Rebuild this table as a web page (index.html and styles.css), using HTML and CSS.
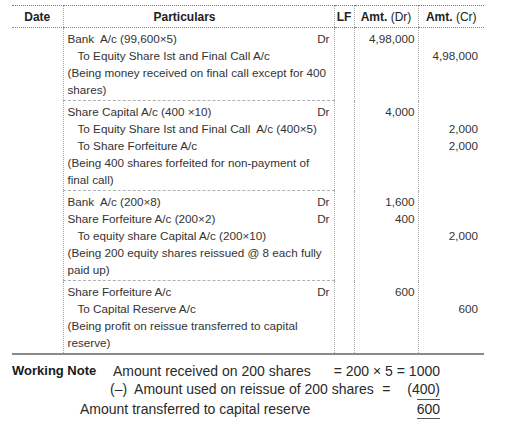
FILE: index.html
```html
<!DOCTYPE html>
<html>
<head>
<meta charset="utf-8">
<link rel="stylesheet" href="styles.css">
</head>
<body>
<div class="page">
<table class="journal">
  <colgroup>
    <col class="c-date"><col class="c-part"><col class="c-lf"><col class="c-dr"><col class="c-cr">
  </colgroup>
  <thead>
    <tr>
      <th class="h-date">Date</th>
      <th class="h-part">Particulars</th>
      <th class="h-lf">LF</th>
      <th class="h-amt">Amt. <span class="reg">(Dr)</span></th>
      <th class="h-amt">Amt. <span class="reg">(Cr)</span></th>
    </tr>
  </thead>
  <tbody>
    <tr>
      <td class="date"></td>
      <td class="part">
        <div class="ln dr"><span>Bank&nbsp; A/c (99,600×5)</span><span>Dr</span></div>
        <div class="ln to">To Equity Share Ist and Final Call A/c</div>
        <div class="ln">(Being money received on final call except for 400</div>
        <div class="ln">shares)</div>
      </td>
      <td class="lf"></td>
      <td class="amt dr-amt"><div class="ln">4,98,000</div></td>
      <td class="amt cr-amt"><div class="ln">&nbsp;</div><div class="ln">4,98,000</div></td>
    </tr>
    <tr>
      <td class="date"></td>
      <td class="part">
        <div class="ln dr"><span>Share Capital A/c (400 ×10)</span><span>Dr</span></div>
        <div class="ln to">To Equity Share Ist and Final Call&nbsp; A/c (400×5)</div>
        <div class="ln to">To Share Forfeiture A/c</div>
        <div class="ln">(Being 400 shares forfeited for non-payment of</div>
        <div class="ln">final call)</div>
      </td>
      <td class="lf"></td>
      <td class="amt dr-amt"><div class="ln">4,000</div></td>
      <td class="amt cr-amt"><div class="ln">&nbsp;</div><div class="ln">2,000</div><div class="ln">2,000</div></td>
    </tr>
    <tr>
      <td class="date"></td>
      <td class="part">
        <div class="ln dr"><span>Bank&nbsp; A/c (200×8)</span><span>Dr</span></div>
        <div class="ln dr"><span>Share Forfeiture A/c (200×2)</span><span>Dr</span></div>
        <div class="ln to">To equity share Capital A/c (200×10)</div>
        <div class="ln">(Being 200 equity shares reissued @ 8 each fully</div>
        <div class="ln">paid up)</div>
      </td>
      <td class="lf"></td>
      <td class="amt dr-amt"><div class="ln">1,600</div><div class="ln">400</div></td>
      <td class="amt cr-amt"><div class="ln">&nbsp;</div><div class="ln">&nbsp;</div><div class="ln">2,000</div></td>
    </tr>
    <tr>
      <td class="date"></td>
      <td class="part">
        <div class="ln dr"><span>Share Forfeiture A/c</span><span>Dr</span></div>
        <div class="ln to">To Capital Reserve A/c</div>
        <div class="ln">(Being profit on reissue transferred to capital</div>
        <div class="ln">reserve)</div>
      </td>
      <td class="lf"></td>
      <td class="amt dr-amt"><div class="ln">600</div></td>
      <td class="amt cr-amt"><div class="ln">&nbsp;</div><div class="ln">600</div></td>
    </tr>
  </tbody>
</table>

<div class="wn">
  <div class="wn-row">
    <div class="wn-left"><b class="wn-label">Working Note</b><span class="wn-t1">Amount received on 200 shares</span></div>
    <div class="wn-right">= 200 × 5 = 1000</div>
  </div>
  <div class="wn-row">
    <div class="wn-left"><span class="wn-t2">(–)&nbsp; Amount used on reissue of 200 shares</span></div>
    <div class="wn-right"><span class="eq">=</span><span>(400)</span></div>
  </div>
  <div class="wn-row last">
    <div class="wn-left"><span class="wn-t3">Amount transferred to capital reserve</span></div>
    <div class="wn-right"><span class="total">600</span></div>
  </div>
</div>
</div>
</body>
</html>
```

FILE: styles.css
```css
html, body {
  margin: 0;
  padding: 0;
  background: #ffffff;
}

body {
  font-family: "Liberation Sans", Arial, sans-serif;
  color: #333333;
}

.page {
  padding: 5px 0 0 12px;
  width: 472px;
}

.journal {
  width: 472px;
  table-layout: fixed;
  border-collapse: collapse;
  font-size: 11.7px;
}

.c-date { width: 51px; }
.c-part { width: 271px; }
.c-lf { width: 20px; }
.c-dr { width: 64px; }
.c-cr { width: 66px; }

.journal th {
  height: 21px;
  padding: 0;
  font-size: 12px;
  font-weight: bold;
  color: #222222;
  text-align: center;
  vertical-align: middle;
  border-top: 1px dotted #777777;
  border-bottom: 1px dotted #888888;
}

.journal th .reg {
  font-weight: normal;
}

.journal th.h-part {
  padding-right: 28px;
}

.journal th + th,
.journal td + td {
  border-left: 1px dotted #a8a8a8;
}

.journal td {
  padding: 2px 0;
  vertical-align: top;
}

.journal tbody tr:last-child td {
  border-bottom: 2px solid #8a8a8a;
}

.journal td.part {
  padding-left: 4px;
  padding-right: 4px;
  border-bottom: 1px dashed #b0b0b0;
}

.ln {
  height: 17px;
  line-height: 17px;
  white-space: nowrap;
}

.ln.dr {
  display: flex;
  justify-content: space-between;
}

.ln.to {
  padding-left: 10px;
}

.amt {
  text-align: right;
}

.dr-amt {
  padding-right: 3px !important;
}

.cr-amt {
  padding-right: 6px !important;
}

/* Working note */
.wn {
  margin-top: 7px;
  font-size: 14px;
  color: #2a2a2a;
}

.wn-row {
  display: flex;
  height: 18px;
  line-height: 18px;
}

.wn-row.last {
  height: 22px;
  align-items: center;
}

.wn-left {
  width: 318px;
  display: flex;
  white-space: nowrap;
}

.wn-label {
  font-size: 13px;
  color: #1a1a1a;
  width: 101px;
}

.wn-t2 {
  padding-left: 98px;
}

.wn-t3 {
  padding-left: 68px;
}

.wn-right {
  width: 110px;
  display: flex;
  justify-content: flex-end;
  white-space: nowrap;
}

.eq {
  margin-right: 17px;
}

.total {
  border-top: 1px solid #555555;
  border-bottom: 1px solid #555555;
  line-height: 16px;
  padding: 1px 0;
}
```
